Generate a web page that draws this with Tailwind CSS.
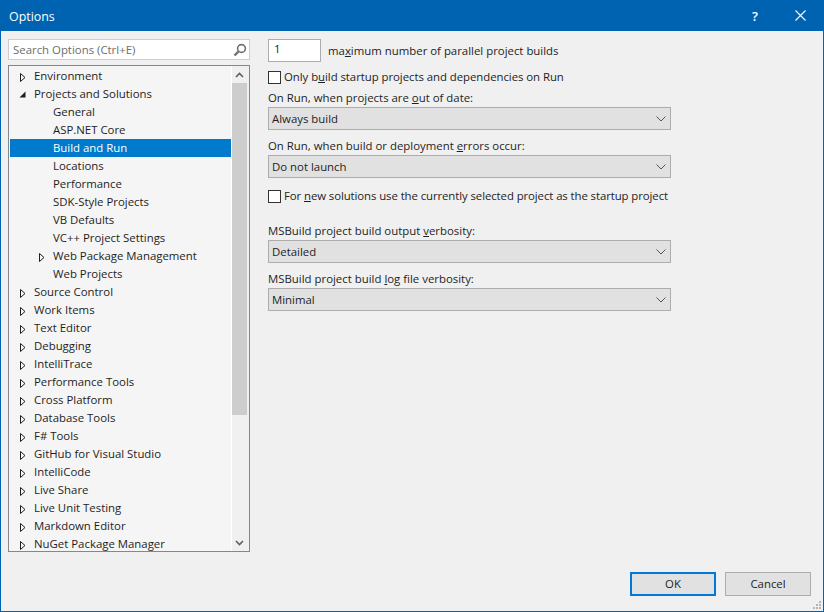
<!DOCTYPE html>
<html lang="en">
<head>
  <meta charset="UTF-8" />
  <title>Options</title>
  <script src="https://cdn.jsdelivr.net/npm/@tailwindcss/browser@4"></script>
</head>
<body class="w-[824px] h-[612px] overflow-hidden bg-[#f0f0f0] text-[#1e1e1e] font-['Open_Sans','Noto_Sans',sans-serif] text-[11.4px] leading-[18px]">
  <div class="relative w-full h-full flex flex-col border border-t-0 border-[#0063b1]">
    <!-- Title bar -->
    <div class="h-[31px] shrink-0 bg-[#0063b1] text-white flex items-center pl-[8px] text-[12.4px]">
      <span class="mt-[2px]">Options</span>
      <span class="ml-auto mr-[37px] text-[13px] font-semibold">?</span>
      <svg class="mr-[17px]" width="11" height="11" viewBox="0 0 11 11" fill="none" stroke="white" stroke-width="1.1"><path d="M.5 .5l10 10M10.5 .5l-10 10" /></svg>
    </div>

    <div class="flex flex-1 min-h-0 pl-[7px] pr-[152px] pt-[8px]">
      <!-- Left column -->
      <div class="w-[242px] shrink-0 flex flex-col">
        <div class="h-[21px] bg-white border border-[#ccced3] flex items-center pl-[4px] pr-[2px] text-[#6d6d6d]">
          <span>Search Options (Ctrl+E)</span>
          <svg class="ml-auto" width="14" height="14" viewBox="0 0 14 14" fill="none" stroke="#717171"><circle cx="8.5" cy="5.5" r="3.9" stroke-width="1.6" /><path d="M5.5 8.5L1.5 12.5" stroke-width="2.4" /></svg>
        </div>
        <div class="mt-[5px] h-[487px] border border-[#828790] bg-[#f5f5f5] flex overflow-hidden">
          <div class="w-[222px] shrink-0 pl-[1px] pt-[1px]">
            <div class="h-[18px] pl-[24px] flex items-center relative"><svg class="absolute left-[10px] top-[6px]" width="6" height="9" viewBox="0 0 6 9" fill="none" stroke="#1e1e1e"><path d="M.5 .5v8l4.5-4z" /></svg>Environment</div>
            <div class="h-[18px] pl-[24px] flex items-center relative"><svg class="absolute left-[9px] top-[6px]" width="7" height="7" viewBox="0 0 7 7" fill="#1e1e1e"><path d="M6.5 .5v6h-6z" /></svg>Projects and Solutions</div>
            <div class="h-[18px] pl-[43px] flex items-center">General</div>
            <div class="h-[18px] pl-[43px] flex items-center">ASP.NET Core</div>
            <div class="h-[18px] pl-[43px] flex items-center bg-[#007acc] text-white">Build and Run</div>
            <div class="h-[18px] pl-[43px] flex items-center">Locations</div>
            <div class="h-[18px] pl-[43px] flex items-center">Performance</div>
            <div class="h-[18px] pl-[43px] flex items-center">SDK-Style Projects</div>
            <div class="h-[18px] pl-[43px] flex items-center">VB Defaults</div>
            <div class="h-[18px] pl-[43px] flex items-center">VC++ Project Settings</div>
            <div class="h-[18px] pl-[43px] flex items-center relative"><svg class="absolute left-[29px] top-[6px]" width="6" height="9" viewBox="0 0 6 9" fill="none" stroke="#1e1e1e"><path d="M.5 .5v8l4.5-4z" /></svg>Web Package Management</div>
            <div class="h-[18px] pl-[43px] flex items-center">Web Projects</div>
            <div class="h-[18px] pl-[24px] flex items-center relative"><svg class="absolute left-[10px] top-[6px]" width="6" height="9" viewBox="0 0 6 9" fill="none" stroke="#1e1e1e"><path d="M.5 .5v8l4.5-4z" /></svg>Source Control</div>
            <div class="h-[18px] pl-[24px] flex items-center relative"><svg class="absolute left-[10px] top-[6px]" width="6" height="9" viewBox="0 0 6 9" fill="none" stroke="#1e1e1e"><path d="M.5 .5v8l4.5-4z" /></svg>Work Items</div>
            <div class="h-[18px] pl-[24px] flex items-center relative"><svg class="absolute left-[10px] top-[6px]" width="6" height="9" viewBox="0 0 6 9" fill="none" stroke="#1e1e1e"><path d="M.5 .5v8l4.5-4z" /></svg>Text Editor</div>
            <div class="h-[18px] pl-[24px] flex items-center relative"><svg class="absolute left-[10px] top-[6px]" width="6" height="9" viewBox="0 0 6 9" fill="none" stroke="#1e1e1e"><path d="M.5 .5v8l4.5-4z" /></svg>Debugging</div>
            <div class="h-[18px] pl-[24px] flex items-center relative"><svg class="absolute left-[10px] top-[6px]" width="6" height="9" viewBox="0 0 6 9" fill="none" stroke="#1e1e1e"><path d="M.5 .5v8l4.5-4z" /></svg>IntelliTrace</div>
            <div class="h-[18px] pl-[24px] flex items-center relative"><svg class="absolute left-[10px] top-[6px]" width="6" height="9" viewBox="0 0 6 9" fill="none" stroke="#1e1e1e"><path d="M.5 .5v8l4.5-4z" /></svg>Performance Tools</div>
            <div class="h-[18px] pl-[24px] flex items-center relative"><svg class="absolute left-[10px] top-[6px]" width="6" height="9" viewBox="0 0 6 9" fill="none" stroke="#1e1e1e"><path d="M.5 .5v8l4.5-4z" /></svg>Cross Platform</div>
            <div class="h-[18px] pl-[24px] flex items-center relative"><svg class="absolute left-[10px] top-[6px]" width="6" height="9" viewBox="0 0 6 9" fill="none" stroke="#1e1e1e"><path d="M.5 .5v8l4.5-4z" /></svg>Database Tools</div>
            <div class="h-[18px] pl-[24px] flex items-center relative"><svg class="absolute left-[10px] top-[6px]" width="6" height="9" viewBox="0 0 6 9" fill="none" stroke="#1e1e1e"><path d="M.5 .5v8l4.5-4z" /></svg>F# Tools</div>
            <div class="h-[18px] pl-[24px] flex items-center relative"><svg class="absolute left-[10px] top-[6px]" width="6" height="9" viewBox="0 0 6 9" fill="none" stroke="#1e1e1e"><path d="M.5 .5v8l4.5-4z" /></svg>GitHub for Visual Studio</div>
            <div class="h-[18px] pl-[24px] flex items-center relative"><svg class="absolute left-[10px] top-[6px]" width="6" height="9" viewBox="0 0 6 9" fill="none" stroke="#1e1e1e"><path d="M.5 .5v8l4.5-4z" /></svg>IntelliCode</div>
            <div class="h-[18px] pl-[24px] flex items-center relative"><svg class="absolute left-[10px] top-[6px]" width="6" height="9" viewBox="0 0 6 9" fill="none" stroke="#1e1e1e"><path d="M.5 .5v8l4.5-4z" /></svg>Live Share</div>
            <div class="h-[18px] pl-[24px] flex items-center relative"><svg class="absolute left-[10px] top-[6px]" width="6" height="9" viewBox="0 0 6 9" fill="none" stroke="#1e1e1e"><path d="M.5 .5v8l4.5-4z" /></svg>Live Unit Testing</div>
            <div class="h-[18px] pl-[24px] flex items-center relative"><svg class="absolute left-[10px] top-[6px]" width="6" height="9" viewBox="0 0 6 9" fill="none" stroke="#1e1e1e"><path d="M.5 .5v8l4.5-4z" /></svg>Markdown Editor</div>
            <div class="h-[18px] pl-[24px] flex items-center relative"><svg class="absolute left-[10px] top-[6px]" width="6" height="9" viewBox="0 0 6 9" fill="none" stroke="#1e1e1e"><path d="M.5 .5v8l4.5-4z" /></svg>NuGet Package Manager</div>
          </div>
          <!-- Scrollbar -->
          <div class="w-[18px] shrink-0 flex flex-col bg-[#f0f0f0] border-l border-white">
            <div class="w-[15px] h-[17px] flex items-center justify-center"><svg width="9" height="6" viewBox="0 0 9 6" fill="none" stroke="#606060" stroke-width="1.6"><path d="M1 5l3.5-3.5L8 5" /></svg></div>
            <div class="w-[15px] h-[332px] bg-[#cdcdcd]"></div>
            <div class="w-[15px] mt-auto h-[17px] flex items-center justify-center"><svg width="9" height="6" viewBox="0 0 9 6" fill="none" stroke="#606060" stroke-width="1.6"><path d="M1 1l3.5 3.5L8 1" /></svg></div>
          </div>
        </div>
      </div>

      <!-- Right column -->
      <div class="w-[403px] ml-[18px] flex flex-col">
        <div class="flex items-center h-[23px]">
          <div class="w-[53px] h-[23px] bg-white border border-[#abadb3] pl-[5px] leading-[18px]">1</div>
          <span class="ml-[7px]">ma<span class="underline">x</span>imum number of parallel project builds</span>
        </div>
        <div class="flex items-center h-[14px] mt-[8px]">
          <div class="w-[13px] h-[13px] shrink-0 bg-white border border-[#333333]"></div>
          <span class="ml-[3px] tracking-[-0.05px]">Only b<span class="underline">u</span>ild startup projects and dependencies on Run</span>
        </div>
        <div class="mt-[5px] h-[18px]">On Run, when projects are <span class="underline">o</span>ut of date:</div>
        <div class="h-[23px] bg-[#e1e1e1] border border-[#adadad] flex items-center pl-[3px] pr-[4px]">
          <span>Always build</span>
          <svg class="ml-auto" width="10" height="6" viewBox="0 0 10 6" fill="none" stroke="#555555"><path d="M.5 .5l4.5 4.5 4.5-4.5" /></svg>
        </div>
        <div class="mt-[7px] h-[18px]">On Run, when build or deployment <span class="underline">e</span>rrors occur:</div>
        <div class="h-[23px] bg-[#e1e1e1] border border-[#adadad] flex items-center pl-[3px] pr-[4px]">
          <span>Do not launch</span>
          <svg class="ml-auto" width="10" height="6" viewBox="0 0 10 6" fill="none" stroke="#555555"><path d="M.5 .5l4.5 4.5 4.5-4.5" /></svg>
        </div>
        <div class="flex items-center h-[14px] mt-[11px] whitespace-nowrap">
          <div class="w-[13px] h-[13px] shrink-0 bg-white border border-[#333333]"></div>
          <span class="ml-[3px] tracking-[-0.09px]">For <span class="underline">n</span>ew solutions use the currently selected project as the startup project</span>
        </div>
        <div class="mt-[19px] h-[18px]">MSBuild project build output <span class="underline">v</span>erbosity:</div>
        <div class="h-[23px] bg-[#e1e1e1] border border-[#adadad] flex items-center pl-[3px] pr-[4px]">
          <span>Detailed</span>
          <svg class="ml-auto" width="10" height="6" viewBox="0 0 10 6" fill="none" stroke="#555555"><path d="M.5 .5l4.5 4.5 4.5-4.5" /></svg>
        </div>
        <div class="mt-[7px] h-[18px]">MSBuild project build <span class="underline">l</span>og file verbosity:</div>
        <div class="h-[23px] bg-[#e1e1e1] border border-[#adadad] flex items-center pl-[3px] pr-[4px]">
          <span>Minimal</span>
          <svg class="ml-auto" width="10" height="6" viewBox="0 0 10 6" fill="none" stroke="#555555"><path d="M.5 .5l4.5 4.5 4.5-4.5" /></svg>
        </div>
      </div>
    </div>

    <!-- Footer buttons -->
    <div class="absolute right-[12px] top-[572px] flex gap-[9px]">
      <div class="w-[86px] h-[24px] bg-[#e1e1e1] border-2 border-[#0078d7] flex items-center justify-center">OK</div>
      <div class="w-[86px] h-[24px] bg-[#e1e1e1] border border-[#adadad] flex items-center justify-center">Cancel</div>
    </div>
    <svg class="absolute right-[1px] bottom-[1px]" width="10" height="10" viewBox="0 0 10 10" fill="#b5b5b5"><path d="M7 1h2v2H7zM4 4h2v2H4zM7 4h2v2H7zM1 7h2v2H1zM4 7h2v2H4zM7 7h2v2H7z" /></svg>
  </div>
</body>
</html>
